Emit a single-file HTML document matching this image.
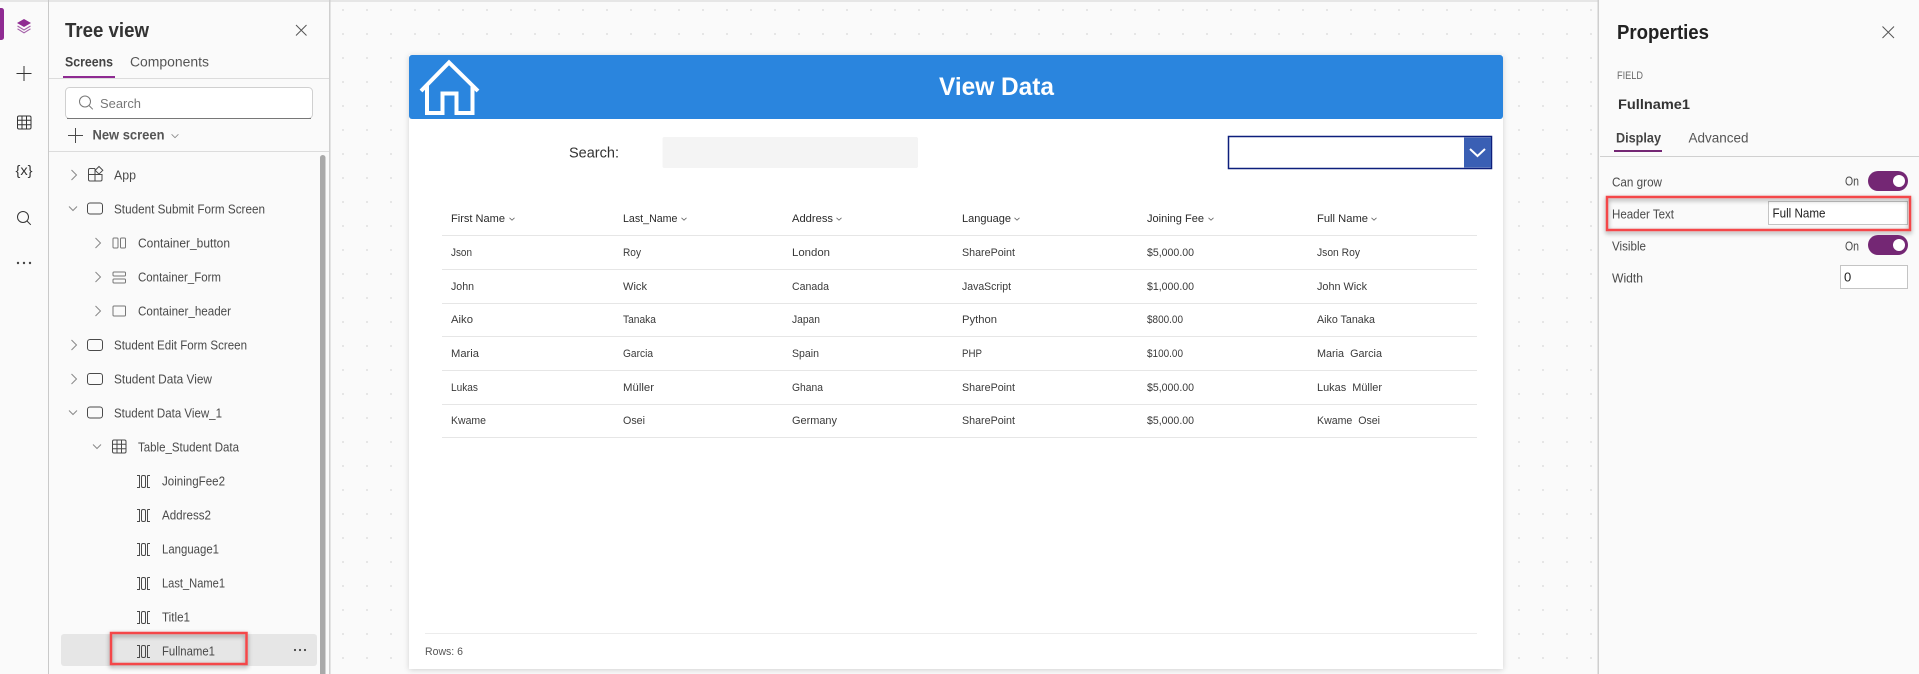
<!DOCTYPE html>
<html lang="en"><head><meta charset="utf-8"><title>Tree view</title>
<style>
html,body{margin:0;padding:0;width:1919px;height:674px;overflow:hidden;background:#fafafa}
svg{display:block}
text{font-family:"Liberation Sans",sans-serif;dominant-baseline:central;white-space:pre}
.tree{font-size:13px;fill:#4a4a4a}
.th{font-size:11px;fill:#2a2a2a}
.td{font-size:11px;fill:#3a3a3a}
.pr{font-size:13px;fill:#4a4a4a}
.ic{fill:none;stroke:#4a4a4a;stroke-width:1}
.ig{fill:none;stroke:#777;stroke-width:1}
.ch{fill:none;stroke:#888;stroke-width:1}
.s{fill:none;stroke:#666;stroke-width:.8}
</style></head><body>
<svg width="1919" height="674" viewBox="0 0 1919 674" xmlns="http://www.w3.org/2000/svg">
<defs>
<pattern id="dots" x="342" y="9" width="24" height="24" patternUnits="userSpaceOnUse"><rect width="2" height="2" fill="#e6e6e6"/></pattern>
<filter id="cs" x="-3%" y="-3%" width="106%" height="106%"><feDropShadow dx="0" dy="1" stdDeviation="3" flood-color="#000" flood-opacity=".16"/></filter>
<filter id="rs" x="-10%" y="-30%" width="120%" height="170%"><feDropShadow dx="0" dy="2" stdDeviation="2.5" flood-color="#000" flood-opacity=".4"/></filter>
<g id="scr"><rect x="87.5" y="-5.5" width="15" height="11" rx="2.5" class="ic"/></g>
<g id="fld" class="ic"><path d="M137 -5.5h2.5v12H137M147.500 -5.500h2.500M147.500 -5.500v12h2.500"/><rect x="141.500" y="-5.500" width="4" height="12" rx="1.500"/></g>
<path id="cr" d="M-2.500 -5L2.500 0l-5 5" class="ch"/>
<path id="cd" d="M-4 -2L0 2L4 -2" class="ch"/>
<path id="sa" d="M-2.500 -1.200L0 1.200L2.500 -1.200" class="s"/>
</defs>

<!-- backgrounds -->
<rect width="1919" height="674" fill="#fafafa"/>
<rect x="330" width="1268" height="674" fill="url(#dots)"/>
<rect width="1919" height="2" fill="#e6e6e6"/>

<!-- rail -->
<rect x="48" y="0" width="1" height="674" fill="#c9c9c9"/>
<rect x="-4" y="8" width="8" height="32" rx="2.500" fill="#8f2b92"/>
<path d="M24 19L31 23L24 27L17 23Z" fill="#8f2b92"/>
<path d="M17.500 26L24 30L30.500 26M17.500 28.800L24 32.800L30.500 28.800" fill="none" stroke="#a45fa8" stroke-width="1.100"/>
<path d="M16.500 73.500H31.500M24 66V81" class="ic" stroke-width="1.100" style="stroke:#333"/>
<g class="ic" style="stroke:#333"><rect x="17.500" y="116" width="13.500" height="13" rx="1.500"/><path d="M22 116v13M26.500 116v13M17.500 120.300h13.500M17.500 124.700h13.500"/></g>
<text x="15.500" y="170" font-size="14" fill="#333" textLength="17" lengthAdjust="spacingAndGlyphs">{x}</text>
<g class="ic" style="stroke:#333"><circle cx="23" cy="217" r="5.500"/><path d="M27 221l3.800 3.800"/></g>
<g fill="#444"><circle cx="18" cy="263" r="1.200"/><circle cx="24" cy="263" r="1.200"/><circle cx="30" cy="263" r="1.200"/></g>

<!-- tree panel -->
<rect x="329" y="0" width="1.500" height="674" fill="#cfcfcf"/>
<text x="65" y="31" font-size="20" font-weight="bold" fill="#333" textLength="84" lengthAdjust="spacingAndGlyphs">Tree view</text>
<path d="M296 25l10.500 10.500M306.500 25L296 35.500" fill="none" stroke="#555"/>
<text x="65" y="62" font-size="13.500" font-weight="bold" fill="#444" textLength="48" lengthAdjust="spacingAndGlyphs">Screens</text>
<text x="130" y="62" font-size="13.500" fill="#555" textLength="79" lengthAdjust="spacingAndGlyphs">Components</text>
<rect x="63" y="76" width="52" height="2" fill="#8f2b92"/>
<rect x="49" y="78" width="280" height="1" fill="#dcdcdc"/>
<rect x="65.500" y="87.500" width="247" height="31" rx="4" fill="#fff" stroke="#d0d0d0"/>
<path d="M67 118.500H311" stroke="#777"/>
<g class="ig"><circle cx="85" cy="101.500" r="5.500"/><path d="M89 105.500l3.800 3.800"/></g>
<text x="100" y="103.500" font-size="13" fill="#777" textLength="41" lengthAdjust="spacingAndGlyphs">Search</text>
<path d="M68 135.500H83M75.500 128V143" class="ic"/>
<text x="92.500" y="135" font-size="13.500" font-weight="bold" fill="#555" textLength="72" lengthAdjust="spacingAndGlyphs">New screen</text>
<use href="#cd" transform="translate(175,136) scale(.85)"/>
<rect x="49" y="151" width="280" height="1" fill="#dcdcdc"/>
<rect x="320" y="155" width="5.500" height="525" rx="2.700" fill="#a9a9a9"/>

<!-- tree rows -->
<use href="#cr" transform="translate(74,175)"/>
<g class="ic"><path d="M95 168.500H90a1.500 1.500 0 0 0-1.500 1.500V179.500a1.500 1.500 0 0 0 1.500 1.500H100.500a1.500 1.500 0 0 0 1.500-1.500V174.500H88.500M95 168.500V181"/><path d="M99 166.500l3.800 3.800-3.800 3.800-3.800-3.800z"/></g>
<text x="114" y="175" class="tree" textLength="22" lengthAdjust="spacingAndGlyphs">App</text>
<use href="#cd" transform="translate(73,208.500)"/><use href="#scr" y="208.500"/>
<text x="114" y="209" class="tree" textLength="151" lengthAdjust="spacingAndGlyphs">Student Submit Form Screen</text>
<use href="#cr" transform="translate(98,243)"/>
<g class="ig"><rect x="113" y="238" width="5" height="10" rx="1"/><rect x="120.500" y="238" width="5" height="10" rx="1"/></g>
<text x="138" y="243" class="tree" textLength="92" lengthAdjust="spacingAndGlyphs">Container_button</text>
<use href="#cr" transform="translate(98,277)"/>
<g class="ig"><rect x="113" y="272" width="12.500" height="4" rx="1"/><rect x="113" y="279" width="12.500" height="4" rx="1"/></g>
<text x="138" y="277" class="tree" textLength="83" lengthAdjust="spacingAndGlyphs">Container_Form</text>
<use href="#cr" transform="translate(98,311)"/>
<rect x="113" y="306" width="12.500" height="10" rx="1" class="ig"/>
<text x="138" y="311" class="tree" textLength="93" lengthAdjust="spacingAndGlyphs">Container_header</text>
<use href="#cr" transform="translate(74,345)"/><use href="#scr" y="345"/>
<text x="114" y="345" class="tree" textLength="133" lengthAdjust="spacingAndGlyphs">Student Edit Form Screen</text>
<use href="#cr" transform="translate(74,379)"/><use href="#scr" y="379"/>
<text x="114" y="379" class="tree" textLength="98" lengthAdjust="spacingAndGlyphs">Student Data View</text>
<use href="#cd" transform="translate(73,412.500)"/><use href="#scr" y="412.500"/>
<text x="114" y="413" class="tree" textLength="108" lengthAdjust="spacingAndGlyphs">Student Data View_1</text>
<use href="#cd" transform="translate(97,446.500)"/>
<g class="ic"><rect x="112.500" y="440" width="13.500" height="13" rx="1.500"/><path d="M117 440v13M121.500 440v13M112.500 444.300h13.500M112.500 448.700h13.500"/></g>
<text x="138" y="447" class="tree" textLength="101" lengthAdjust="spacingAndGlyphs">Table_Student Data</text>

<use href="#fld" y="481"/><text x="162" y="481" class="tree" textLength="63" lengthAdjust="spacingAndGlyphs">JoiningFee2</text>
<use href="#fld" y="515"/><text x="162" y="515" class="tree" textLength="49" lengthAdjust="spacingAndGlyphs">Address2</text>
<use href="#fld" y="549"/><text x="162" y="549" class="tree" textLength="57" lengthAdjust="spacingAndGlyphs">Language1</text>
<use href="#fld" y="583"/><text x="162" y="583" class="tree" textLength="63" lengthAdjust="spacingAndGlyphs">Last_Name1</text>
<use href="#fld" y="617"/><text x="162" y="617" class="tree" textLength="28" lengthAdjust="spacingAndGlyphs">Title1</text>
<rect x="61" y="634" width="256" height="32" rx="3" fill="#e6e6e6"/>
<use href="#fld" y="651"/><text x="162" y="651" class="tree" textLength="53" lengthAdjust="spacingAndGlyphs">Fullname1</text>
<g fill="#444"><circle cx="295" cy="650" r="1.100"/><circle cx="300" cy="650" r="1.100"/><circle cx="305" cy="650" r="1.100"/></g>
<rect x="111" y="633" width="135.500" height="31" fill="none" stroke="#f4474a" stroke-width="2.500" filter="url(#rs)"/>

<!-- canvas card -->
<rect x="409" y="55" width="1094" height="614" fill="#fff" filter="url(#cs)"/>
<rect x="409" y="55" width="1094" height="64" rx="3" fill="#2a85de"/>
<path d="M421 91L449 62.500L478 91" fill="none" stroke="#fff" stroke-width="4"/>
<path d="M427 85V113H442.500V93.500H456.500V113H472.500V85" fill="none" stroke="#fff" stroke-width="4"/>
<text x="939" y="87" font-size="25" font-weight="bold" fill="#fff" textLength="115" lengthAdjust="spacingAndGlyphs">View Data</text>
<text x="569" y="153" font-size="15" fill="#333" textLength="50" lengthAdjust="spacingAndGlyphs">Search:</text>
<rect x="662.500" y="137" width="255.500" height="31" rx="2" fill="#f4f4f4"/>
<rect x="1228.500" y="136.500" width="263" height="32" fill="#fff" stroke="#0d1f7c" stroke-width="1.500"/>
<rect x="1464" y="137.500" width="27" height="30" fill="#3a5fb4"/>
<path d="M1470 149L1477.500 156L1485 149" fill="none" stroke="#fff" stroke-width="2"/>

<!-- table header -->
<g>
<text x="451" y="219" class="th" textLength="54" lengthAdjust="spacingAndGlyphs">First Name</text><use href="#sa" x="512" y="219"/>
<text x="623" y="219" class="th" textLength="54.500" lengthAdjust="spacingAndGlyphs">Last_Name</text><use href="#sa" x="684" y="219"/>
<text x="792" y="219" class="th" textLength="41" lengthAdjust="spacingAndGlyphs">Address</text><use href="#sa" x="839" y="219"/>
<text x="962" y="219" class="th" textLength="49" lengthAdjust="spacingAndGlyphs">Language</text><use href="#sa" x="1017" y="219"/>
<text x="1147" y="219" class="th" textLength="57" lengthAdjust="spacingAndGlyphs">Joining Fee</text><use href="#sa" x="1211" y="219"/>
<text x="1317" y="219" class="th" textLength="51" lengthAdjust="spacingAndGlyphs">Full Name</text><use href="#sa" x="1374" y="219"/>
</g>
<g fill="#e6e6e6">
<rect x="442" y="235" width="1035" height="1"/><rect x="442" y="269" width="1035" height="1"/><rect x="442" y="303" width="1035" height="1"/><rect x="442" y="336" width="1035" height="1"/><rect x="442" y="370" width="1035" height="1"/><rect x="442" y="404" width="1035" height="1"/><rect x="442" y="437" width="1035" height="1"/>
</g>
<!-- rows -->
<text x="451" y="253" class="td" textLength="21" lengthAdjust="spacingAndGlyphs">Json</text><text x="623" y="253" class="td" textLength="18" lengthAdjust="spacingAndGlyphs">Roy</text><text x="792" y="253" class="td" textLength="38" lengthAdjust="spacingAndGlyphs">London</text><text x="962" y="253" class="td" textLength="53" lengthAdjust="spacingAndGlyphs">SharePoint</text><text x="1147" y="253" class="td" textLength="47" lengthAdjust="spacingAndGlyphs">$5,000.00</text><text x="1317" y="253" class="td" textLength="43" lengthAdjust="spacingAndGlyphs">Json Roy</text>
<text x="451" y="287" class="td" textLength="23" lengthAdjust="spacingAndGlyphs">John</text><text x="623" y="287" class="td" textLength="24" lengthAdjust="spacingAndGlyphs">Wick</text><text x="792" y="287" class="td" textLength="37" lengthAdjust="spacingAndGlyphs">Canada</text><text x="962" y="287" class="td" textLength="49" lengthAdjust="spacingAndGlyphs">JavaScript</text><text x="1147" y="287" class="td" textLength="47" lengthAdjust="spacingAndGlyphs">$1,000.00</text><text x="1317" y="287" class="td" textLength="50" lengthAdjust="spacingAndGlyphs">John Wick</text>
<text x="451" y="320" class="td" textLength="22" lengthAdjust="spacingAndGlyphs">Aiko</text><text x="623" y="320" class="td" textLength="33" lengthAdjust="spacingAndGlyphs">Tanaka</text><text x="792" y="320" class="td" textLength="28" lengthAdjust="spacingAndGlyphs">Japan</text><text x="962" y="320" class="td" textLength="35" lengthAdjust="spacingAndGlyphs">Python</text><text x="1147" y="320" class="td" textLength="36" lengthAdjust="spacingAndGlyphs">$800.00</text><text x="1317" y="320" class="td" textLength="58" lengthAdjust="spacingAndGlyphs">Aiko Tanaka</text>
<text x="451" y="354" class="td" textLength="28" lengthAdjust="spacingAndGlyphs">Maria</text><text x="623" y="354" class="td" textLength="30" lengthAdjust="spacingAndGlyphs">Garcia</text><text x="792" y="354" class="td" textLength="27" lengthAdjust="spacingAndGlyphs">Spain</text><text x="962" y="354" class="td" textLength="20" lengthAdjust="spacingAndGlyphs">PHP</text><text x="1147" y="354" class="td" textLength="36" lengthAdjust="spacingAndGlyphs">$100.00</text><text x="1317" y="354" class="td" textLength="65" lengthAdjust="spacingAndGlyphs">Maria  Garcia</text>
<text x="451" y="388" class="td" textLength="27" lengthAdjust="spacingAndGlyphs">Lukas</text><text x="623" y="388" class="td" textLength="31" lengthAdjust="spacingAndGlyphs">Müller</text><text x="792" y="388" class="td" textLength="31" lengthAdjust="spacingAndGlyphs">Ghana</text><text x="962" y="388" class="td" textLength="53" lengthAdjust="spacingAndGlyphs">SharePoint</text><text x="1147" y="388" class="td" textLength="47" lengthAdjust="spacingAndGlyphs">$5,000.00</text><text x="1317" y="388" class="td" textLength="65" lengthAdjust="spacingAndGlyphs">Lukas  Müller</text>
<text x="451" y="421" class="td" textLength="35" lengthAdjust="spacingAndGlyphs">Kwame</text><text x="623" y="421" class="td" textLength="22" lengthAdjust="spacingAndGlyphs">Osei</text><text x="792" y="421" class="td" textLength="45" lengthAdjust="spacingAndGlyphs">Germany</text><text x="962" y="421" class="td" textLength="53" lengthAdjust="spacingAndGlyphs">SharePoint</text><text x="1147" y="421" class="td" textLength="47" lengthAdjust="spacingAndGlyphs">$5,000.00</text><text x="1317" y="421" class="td" textLength="63" lengthAdjust="spacingAndGlyphs">Kwame  Osei</text>
<rect x="425" y="633" width="1052" height="1" fill="#ececec"/>
<text x="425" y="652" font-size="11" fill="#555" textLength="38" lengthAdjust="spacingAndGlyphs">Rows: 6</text>

<!-- properties panel -->
<rect x="1598" y="0" width="321" height="674" fill="#fafafa"/>
<rect x="1597.500" y="0" width="1.500" height="674" fill="#cfcfcf"/>
<text x="1617" y="33" font-size="20" font-weight="bold" fill="#222" textLength="92" lengthAdjust="spacingAndGlyphs">Properties</text>
<path d="M1882.500 26.500l11.500 11.500M1894 26.500l-11.500 11.500" fill="none" stroke="#555"/>
<text x="1617" y="76" font-size="11" fill="#6a6a6a" textLength="26" lengthAdjust="spacingAndGlyphs">FIELD</text>
<text x="1618" y="104" font-size="14" font-weight="bold" fill="#333" textLength="72" lengthAdjust="spacingAndGlyphs">Fullname1</text>
<text x="1616" y="138" font-size="13.500" font-weight="bold" fill="#444" textLength="45" lengthAdjust="spacingAndGlyphs">Display</text>
<text x="1688.500" y="138" font-size="13.500" fill="#555" textLength="60" lengthAdjust="spacingAndGlyphs">Advanced</text>
<rect x="1614" y="150" width="48" height="2" fill="#742774"/>
<rect x="1600" y="156" width="319" height="1" fill="#d0d0d0"/>
<text x="1612" y="182" class="pr" textLength="50" lengthAdjust="spacingAndGlyphs">Can grow</text>
<text x="1845" y="181" class="pr" textLength="14" lengthAdjust="spacingAndGlyphs">On</text>
<rect x="1868" y="171" width="40" height="20" rx="10" fill="#742774"/><circle cx="1899" cy="181" r="6" fill="#fff"/>
<text x="1612" y="214" class="pr" textLength="62" lengthAdjust="spacingAndGlyphs">Header Text</text>
<rect x="1768.500" y="201.500" width="139" height="23" fill="#fff" stroke="#c4c4c4"/>
<text x="1772.500" y="213" class="pr" style="fill:#222" textLength="53" lengthAdjust="spacingAndGlyphs">Full Name</text>
<rect x="1607" y="197" width="303" height="33" fill="none" stroke="#f4474a" stroke-width="2.500" filter="url(#rs)"/>
<text x="1612" y="246" class="pr" textLength="34" lengthAdjust="spacingAndGlyphs">Visible</text>
<text x="1845" y="246" class="pr" textLength="14" lengthAdjust="spacingAndGlyphs">On</text>
<rect x="1868" y="235" width="40" height="20" rx="10" fill="#742774"/><circle cx="1899" cy="245" r="6" fill="#fff"/>
<text x="1612" y="278" class="pr" textLength="31" lengthAdjust="spacingAndGlyphs">Width</text>
<rect x="1840.500" y="265.500" width="67" height="23" fill="#fff" stroke="#c4c4c4"/>
<text x="1844" y="277" class="pr" style="fill:#222">0</text>
</svg>
</body></html>
